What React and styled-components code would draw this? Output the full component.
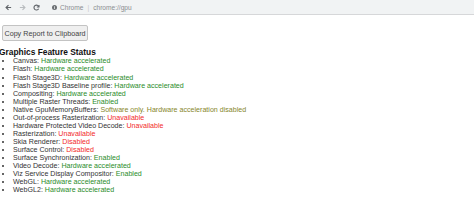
import React from "react";
import styled, { createGlobalStyle } from "styled-components";

const Global = createGlobalStyle`
  html, body { margin: 0; padding: 0; background: #fff; }
  body { font-family: "Liberation Sans", Arial, sans-serif; overflow: hidden; }
`;

const Toolbar = styled.div`
  height: 14px;
  background: #f1f3f4;
  border-bottom: 1px solid #d6d7d9;
  display: flex;
  align-items: center;
  padding-left: 5px;
  gap: 7px;
`;

const NavIcon = styled.svg`
  width: 7px;
  height: 7px;
  flex: none;
  stroke: ${(p) => (p.$disabled ? "#b9bcbf" : "#5f6368")};
  fill: none;
  stroke-width: 1.3;
`;

const Omni = styled.div`
  display: flex;
  align-items: center;
  gap: 3px;
  font-size: 6.6px;
  color: #8a8d91;
  margin-left: 5px;
`;

const Sep = styled.span`
  color: #c7c9cc;
  margin: 0 1px;
`;

const Main = styled.div`
  padding-top: 10px;
`;

const CopyButton = styled.button`
  margin-left: 2px;
  width: 86px;
  height: 16px;
  padding: 0;
  font-family: "Liberation Sans", Arial, sans-serif;
  font-size: 7.2px;
  color: #444;
  background: #efefef;
  border: 1px solid #c3c3c3;
  border-radius: 2px;
  display: block;
`;

const Heading = styled.h3`
  margin: 7px 0 0 -1px;
  font-size: 8.4px;
  line-height: 9.4px;
  font-weight: bold;
  color: #111;
`;

const List = styled.ul`
  margin: 0;
  padding-left: 13px;
  font-size: 7.1px;
  line-height: 8.05px;
  color: #333;
`;

const Item = styled.li``;

const colors = { green: "#2a8c2a", red: "#f22a2a", yellow: "#86862a" };

const Status = styled.span`
  color: ${(p) => colors[p.$c]};
`;

const features = [
  ["Canvas", "Hardware accelerated", "green"],
  ["Flash", "Hardware accelerated", "green"],
  ["Flash Stage3D", "Hardware accelerated", "green"],
  ["Flash Stage3D Baseline profile", "Hardware accelerated", "green"],
  ["Compositing", "Hardware accelerated", "green"],
  ["Multiple Raster Threads", "Enabled", "green"],
  ["Native GpuMemoryBuffers", "Software only. Hardware acceleration disabled", "yellow"],
  ["Out-of-process Rasterization", "Unavailable", "red"],
  ["Hardware Protected Video Decode", "Unavailable", "red"],
  ["Rasterization", "Unavailable", "red"],
  ["Skia Renderer", "Disabled", "red"],
  ["Surface Control", "Disabled", "red"],
  ["Surface Synchronization", "Enabled", "green"],
  ["Video Decode", "Hardware accelerated", "green"],
  ["Viz Service Display Compositor", "Enabled", "green"],
  ["WebGL", "Hardware accelerated", "green"],
  ["WebGL2", "Hardware accelerated", "green"],
];

export default function App() {
  return (
    <>
      <Global />
      <Toolbar>
        <NavIcon viewBox="0 0 8 8">
          <path d="M7 4H1.5M4 1.2L1.2 4L4 6.8" />
        </NavIcon>
        <NavIcon viewBox="0 0 8 8" $disabled>
          <path d="M1 4h5.5M4 1.2L6.8 4L4 6.8" />
        </NavIcon>
        <NavIcon viewBox="0 0 8 8">
          <path d="M6.6 3.2A2.8 2.8 0 1 0 6.4 5.4" />
          <path d="M6.8 1v2.4H4.4" />
        </NavIcon>
        <Omni>
          <svg width="5" height="5" viewBox="0 0 10 10">
            <circle cx="5" cy="5" r="5" fill="#6b6f73" />
            <rect x="4.2" y="4.2" width="1.6" height="3.6" fill="#f1f3f4" />
            <rect x="4.2" y="2.2" width="1.6" height="1.4" fill="#f1f3f4" />
          </svg>
          <span>Chrome</span>
          <Sep>|</Sep>
          <span>chrome://gpu</span>
        </Omni>
      </Toolbar>
      <Main>
        <CopyButton>Copy Report to Clipboard</CopyButton>
        <Heading>Graphics Feature Status</Heading>
        <List>
          {features.map(([name, status, c]) => (
            <Item key={name}>
              {name}: <Status $c={c}>{status}</Status>
            </Item>
          ))}
        </List>
      </Main>
    </>
  );
}
